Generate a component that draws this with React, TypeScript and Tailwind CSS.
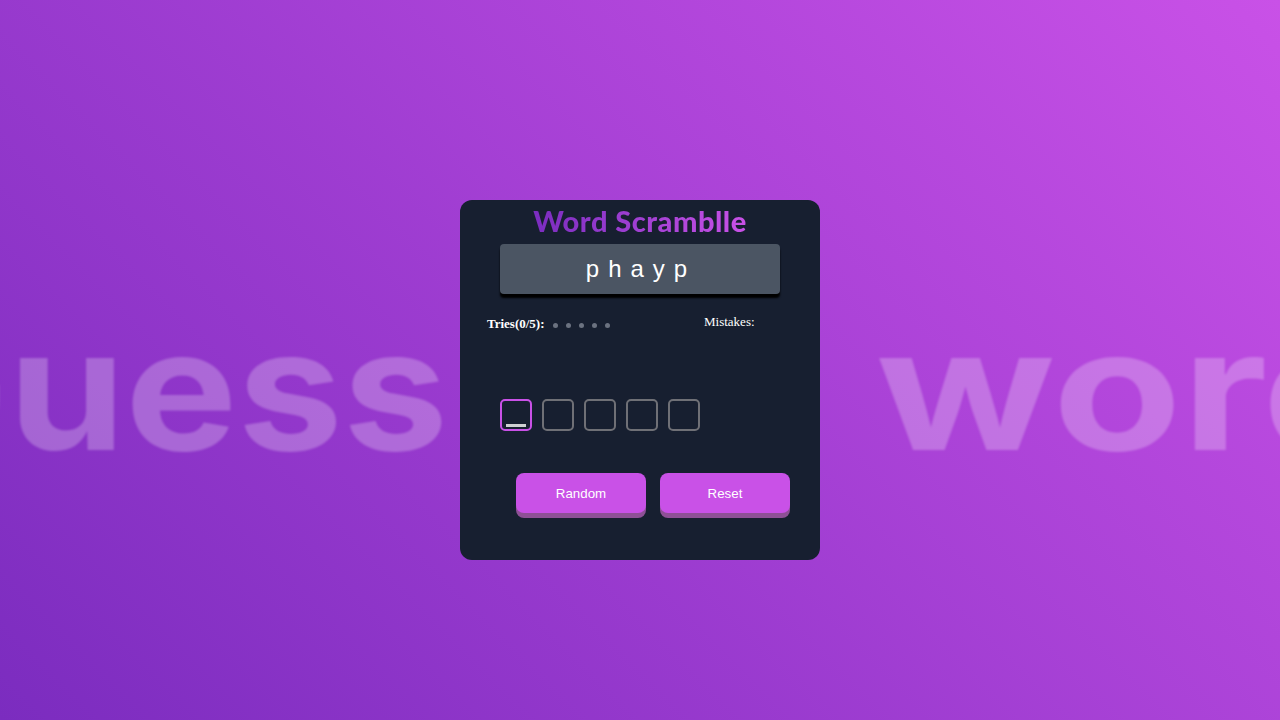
function Cell({ active }: { active?: boolean }) {
  return (
    <div
      className={`relative w-8 h-8 rounded-[5px] border-2 ${active ? 'border-[#c951e7]' : 'border-[#6f7076]'}`}
    >
      {active && <span className="absolute left-1 bottom-0.5 w-5 h-[3px] bg-[#cfd0d2]" />}
    </div>
  );
}

function GameButton({ label }: { label: string }) {
  return (
    <button className="w-[130px] h-10 pt-0.5 rounded-lg bg-[#c951e7] text-[13.33px] text-white shadow-[0_5px_0_#8e5096]">
      {label}
    </button>
  );
}

export default function App() {
  return (
    <div className="relative h-screen overflow-hidden pt-10 flex items-center justify-center bg-[linear-gradient(45deg,#7b2cbf,#c951e7)] font-['Liberation_Sans',sans-serif]">
      <div className="absolute left-[-133px] top-[289px] origin-left scale-x-[1.12] whitespace-nowrap text-[168px] leading-[200px] [word-spacing:18px] font-bold text-white/25 blur-[1px] font-['Inter',sans-serif]">
        Guess the <span className="inline-block origin-left scale-x-[1.12]">word</span>
      </div>

      <div className="relative w-[360px] h-[360px] rounded-xl bg-[#171f30] flex flex-col items-center">
        <h1 className="h-[44px] leading-[42px] text-[29px] font-black tracking-[0.5px] text-transparent bg-clip-text bg-gradient-to-r from-[#7b2cbf] to-[#c951e7] font-['Lato',sans-serif]">
          Word Scramblle
        </h1>

        <div className="w-[280px] h-[50px] pl-0.5 rounded bg-[#4b5563] shadow-[0_4px_2px_#000] flex items-center justify-center text-[24px] tracking-[9px] text-white">
          phayp
        </div>

        <div className="w-full mt-[18px] pl-[27px] flex items-start font-['Liberation_Serif',serif] text-[13px] text-white">
          <div className="mt-[2px] flex items-center gap-2 w-[217px]">
            <span className="font-bold">Tries(0/5):</span>
            <div className="flex gap-2 mt-[3px]">
              {[0, 1, 2, 3, 4].map((i) => (
                <span key={i} className="w-[5px] h-[5px] rounded-full bg-[#6b7280]" />
              ))}
            </div>
          </div>
          <span>Mistakes:</span>
        </div>

        <div className="w-[280px] mt-[65px] flex gap-[10px]">
          <Cell active />
          <Cell />
          <Cell />
          <Cell />
          <Cell />
        </div>

        <div className="w-full mt-[42px] pr-[30px] flex justify-end gap-[14px]">
          <GameButton label="Random" />
          <GameButton label="Reset" />
        </div>
      </div>
    </div>
  );
}
